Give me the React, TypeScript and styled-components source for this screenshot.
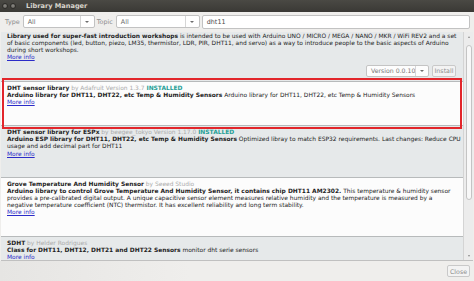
import React from "react";
import styled, { createGlobalStyle } from "styled-components";

const Global = createGlobalStyle`
  html, body { margin: 0; padding: 0; background: #efeeec; }
  body { font-family: "DejaVu Sans", "Liberation Sans", sans-serif; }
  * { box-sizing: border-box; }
`;

const Window = styled.div`
  position: relative;
  width: 474px;
  height: 281px;
  display: flex;
  flex-direction: column;
  overflow: hidden;
  background: #efeeec;
`;

const TitleBar = styled.div`
  flex: none;
  height: 12px;
  display: flex;
  align-items: center;
  padding-left: 2px;
  gap: 2px;
  background: linear-gradient(#4a4944, #3a3935);
`;

const WinButton = styled.span`
  width: 6px;
  height: 6px;
  border-radius: 50%;
  background: radial-gradient(circle at 50% 40%, #8a8883, #5d5c57);
  border: 1px solid #2e2d2a;
`;

const Title = styled.span`
  margin-left: 8px;
  font-size: 6.6px;
  font-weight: bold;
  color: #d8d4cc;
`;

const Toolbar = styled.div`
  flex: none;
  height: 20px;
  display: flex;
  align-items: center;
  padding: 1px 4px 2px 5px;
  font-size: 6.4px;
`;

const Label = styled.span`
  color: #8c8c8c;
  margin-right: 3px;
`;

const Combo = styled.div<{ $w: number }>`
  width: ${(p) => p.$w}px;
  height: 13px;
  display: flex;
  align-items: stretch;
  background: #fff;
  border: 1px solid #c2c2c2;
  border-radius: 2px;
  margin-right: 2px;
  color: #6a6a6a;
`;

const ComboText = styled.span`
  flex: 1;
  display: flex;
  align-items: center;
  padding-left: 4px;
`;

const ComboArrow = styled.span`
  width: 14px;
  display: flex;
  align-items: center;
  justify-content: center;
  border-left: 1px solid #d6d6d6;
  &::after {
    content: "";
    border-left: 2px solid transparent;
    border-right: 2px solid transparent;
    border-top: 2.5px solid #6d6d6d;
  }
`;

const Search = styled.div`
  flex: 1;
  height: 14px;
  display: flex;
  align-items: center;
  padding-left: 4px;
  background: #fff;
  border: 1px solid #c2c2c2;
  border-radius: 2px;
  color: #4a4a4a;
`;

const ListFrame = styled.div`
  flex: 1;
  min-height: 0;
  display: flex;
  margin: 0 1px;
  border-bottom: 1px solid #c0c0c0;
`;

const ListViewport = styled.div`
  flex: 1;
  min-width: 0;
  overflow: hidden;
`;

const Item = styled.div<{ $alt: boolean; $first?: boolean }>`
  background: ${(p) => (p.$alt ? "#e6e9ea" : "#fcfcfc")};
  border-bottom: 1px solid #b7babb;
  padding: ${(p) => (p.$first ? "0" : "2px")} 0 0 6px;
  font-size: 5.93px;
  line-height: 7.15px;
  color: #242424;
  white-space: nowrap;
  overflow: hidden;
`;

const Name = styled.b`
  font-weight: bold;
  color: #1e1e1e;
`;

const Meta = styled.span`
  color: #ababab;
`;

const Installed = styled.b`
  color: #1f9e96;
`;

const Line = styled.div``;

const MoreInfo = styled.a`
  color: #2b2bc8;
  text-decoration: underline;
  display: block;
`;

const Footer = styled.div`
  height: 20px;
  display: flex;
  align-items: center;
  justify-content: flex-end;
  gap: 3px;
  padding-right: 7px;
`;

const VersionSelect = styled.div`
  width: 63px;
  height: 12px;
  display: flex;
  background: #fdfdfd;
  border: 1px solid #c4c4c4;
  border-radius: 2px;
  font-size: 6.2px;
  color: #777;
`;

const SmallButton = styled.div<{ $w: number }>`
  width: ${(p) => p.$w}px;
  height: 12px;
  display: flex;
  align-items: center;
  justify-content: center;
  background: #f3f3f3;
  border: 1px solid #c9c9c9;
  border-radius: 2px;
  font-size: 6.3px;
  color: #8e8e8e;
`;

const Scrollbar = styled.div`
  flex: none;
  width: 10px;
  display: flex;
  flex-direction: column;
  background: #ececec;
  border-left: 1px solid #d4d4d4;
  padding: 0 1px 0 2px;
`;

const Arrow = styled.div<{ $up: boolean }>`
  height: 9px;
  display: flex;
  align-items: center;
  justify-content: center;
  &::after {
    content: "";
    border-left: 1.5px solid transparent;
    border-right: 1.5px solid transparent;
    ${(p) => (p.$up ? "border-bottom" : "border-top")}: 2px solid #8a8a8a;
  }
`;

const Track = styled.div`
  flex: 1;
  padding-top: 4px;
`;

const Thumb = styled.div`
  height: 155px;
  background: #f8f8f8;
  border: 1px solid #c4c4c4;
  border-radius: 3px;
`;

const BottomBar = styled.div`
  flex: none;
  height: 20px;
  display: flex;
  align-items: center;
  justify-content: flex-end;
  padding-right: 4px;
  background: linear-gradient(90deg, #e6e5e3, #efeeec 40%);
`;

const Highlight = styled.div`
  position: absolute;
  left: 2px;
  top: 78px;
  width: 460px;
  height: 51px;
  border: 2px solid #e2262b;
  pointer-events: none;
`;

export default function App() {
  return (
    <Window>
      <Global />
      <TitleBar>
        <WinButton />
        <WinButton />
        <Title>Library Manager</Title>
      </TitleBar>
      <Toolbar>
        <Label>Type</Label>
        <Combo $w={72}>
          <ComboText>All</ComboText>
          <ComboArrow />
        </Combo>
        <Label>Topic</Label>
        <Combo $w={84}>
          <ComboText>All</ComboText>
          <ComboArrow />
        </Combo>
        <Search>dht11</Search>
      </Toolbar>
      <ListFrame>
        <ListViewport>
          <Item $alt $first>
            <Line>
              <Name>Library used for super-fast introduction workshops</Name> is intended to be used with Arduino
              UNO / MICRO / MEGA / NANO / MKR / WiFi REV2 and a set
            </Line>
            <Line>
              of basic components (led, button, piezo, LM35, thermistor, LDR, PIR, DHT11, and servo) as a way to
              introduce people to the basic aspects of Arduino
            </Line>
            <Line>during short workshops.</Line>
            <MoreInfo>More info</MoreInfo>
            <Footer>
              <VersionSelect>
                <ComboText>Version 0.0.10</ComboText>
                <ComboArrow />
              </VersionSelect>
              <SmallButton $w={24}>Install</SmallButton>
            </Footer>
          </Item>
          <Item $alt={false}>
            <Line>
              <Name>DHT sensor library</Name> <Meta>by Adafruit Version 1.3.7</Meta> <Installed>INSTALLED</Installed>
            </Line>
            <Line>
              <Name>Arduino library for DHT11, DHT22, etc Temp &amp; Humidity Sensors</Name> Arduino library for
              DHT11, DHT22, etc Temp &amp; Humidity Sensors
            </Line>
            <MoreInfo>More info</MoreInfo>
            <Footer />
          </Item>
          <Item $alt>
            <Line>
              <Name>DHT sensor library for ESPx</Name> <Meta>by beegee_tokyo Version 1.17.0</Meta>{" "}
              <Installed>INSTALLED</Installed>
            </Line>
            <Line>
              <Name>Arduino ESP library for DHT11, DHT22, etc Temp &amp; Humidity Sensors</Name> Optimized libray to
              match ESP32 requirements. Last changes: Reduce CPU
            </Line>
            <Line>usage and add decimal part for DHT11</Line>
            <MoreInfo>More info</MoreInfo>
            <Footer />
          </Item>
          <Item $alt={false}>
            <Line>
              <Name>Grove Temperature And Humidity Sensor</Name> <Meta>by Seeed Studio</Meta>
            </Line>
            <Line>
              <Name>
                Arduino library to control Grove Temperature And Humidity Sensor, it contains chip DHT11 AM2302.
              </Name>{" "}
              This temperature &amp; humidity sensor
            </Line>
            <Line>
              provides a pre-calibrated digital output. A unique capacitive sensor element measures relative humidity
              and the temperature is measured by a
            </Line>
            <Line>
              negative temperature coefficient (NTC) thermistor. It has excellent reliability and long term stability.
            </Line>
            <MoreInfo>More info</MoreInfo>
            <Footer />
          </Item>
          <Item $alt>
            <Line>
              <Name>SDHT</Name> <Meta>by Helder Rodrigues</Meta>
            </Line>
            <Line>
              <Name>Class for DHT11, DHT12, DHT21 and DHT22 Sensors</Name> monitor dht serie sensors
            </Line>
            <MoreInfo>More info</MoreInfo>
            <Footer />
          </Item>
        </ListViewport>
        <Scrollbar>
          <Arrow $up />
          <Track>
            <Thumb />
          </Track>
          <Arrow $up={false} />
        </Scrollbar>
      </ListFrame>
      <BottomBar>
        <SmallButton $w={23}>Close</SmallButton>
      </BottomBar>
      <Highlight />
    </Window>
  );
}
